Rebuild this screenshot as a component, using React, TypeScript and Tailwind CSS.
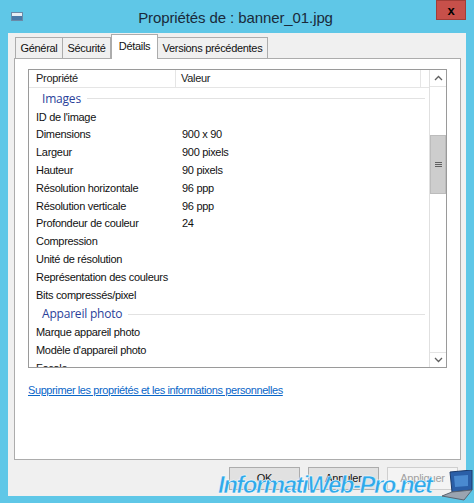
import React from "react";

const rows: Array<{ group?: string; label?: string; value?: string }> = [
  { group: "Images" },
  { label: "ID de l'image" },
  { label: "Dimensions", value: "900 x 90" },
  { label: "Largeur", value: "900 pixels" },
  { label: "Hauteur", value: "90 pixels" },
  { label: "Résolution horizontale", value: "96 ppp" },
  { label: "Résolution verticale", value: "96 ppp" },
  { label: "Profondeur de couleur", value: "24" },
  { label: "Compression" },
  { label: "Unité de résolution" },
  { label: "Représentation des couleurs" },
  { label: "Bits compressés/pixel" },
  { group: "Appareil photo" },
  { label: "Marque appareil photo" },
  { label: "Modèle d'appareil photo" },
  { label: "Focale" },
];

function Btn({ label, disabled }: { label: string; disabled?: boolean }) {
  return (
    <div
      className={
        "w-[71px] h-[23px] flex items-center justify-center border text-[11px] tracking-[-0.2px] " +
        (disabled ? "border-[#cfcfcf] bg-[#f4f4f4] text-[#a0a0a0]" : "border-[#acacac] bg-[#e1e1e1] text-[#111]")
      }
    >
      {label}
    </div>
  );
}

export default function App() {
  return (
    <div
      className="relative w-[474px] h-[503px] bg-[#5fc7e7] flex flex-col overflow-hidden"
      style={{ fontFamily: '"Liberation Sans", Arial, sans-serif' }}
    >
      {/* title bar */}
      <div className="h-[33px] flex items-start relative">
        <div className="mt-[12px] ml-[11px] w-[12px] h-[9px] bg-[#e8eef4] border border-[#6a8aa8] flex items-end">
          <div className="w-full h-[4px] bg-[#4a7aa8]" />
        </div>
        <div className="flex-1 text-center mt-[7px] text-[15px] text-[#1a2a3a] tracking-[-0.1px] pl-[12px]">
          Propriétés de : banner_01.jpg
        </div>
        <div className="w-[30px] h-[20px] mr-[8px] bg-[#c7504a] border border-[#a23d37] flex items-center justify-center text-[13px] font-bold text-black leading-none">
          x
        </div>
      </div>

      {/* client area */}
      <div className="mx-[8px] h-[463px] bg-[#f0f0f0] flex flex-col px-[6px]">
        {/* tabs */}
        <div className="h-[25px] flex items-end pl-[1px] text-[11px] tracking-[-0.3px] text-[#111]">
          <div className="w-[48px] h-[21px] border border-b-0 border-[#acacac] bg-[#f0f0f0] flex items-center justify-center">Général</div>
          <div className="w-[48px] h-[21px] border border-b-0 border-l-0 border-[#acacac] bg-[#f0f0f0] flex items-center justify-center">Sécurité</div>
          <div className="w-[47px] h-[25px] border border-b-0 border-[#acacac] bg-white flex justify-center pt-[3px] -mb-[1px] relative z-10">Détails</div>
          <div className="w-[110px] h-[21px] border border-b-0 border-l-0 border-[#acacac] bg-[#f0f0f0] flex items-center justify-center">Versions précédentes</div>
        </div>

        {/* tab panel */}
        <div className="h-[402px] w-[447px] bg-white border border-[#acacac] flex flex-col px-[13px] pt-[10px]">
          {/* list view */}
          <div className="h-[299px] w-[419px] border border-[#9a9a9a] flex">
            <div className="flex-1 flex flex-col overflow-hidden">
              <div className="h-[18px] flex text-[11px] tracking-[-0.3px] text-[#222] border-b border-[#e5e5e5] shrink-0">
                <div className="w-[147px] pl-[7px] border-r border-[#e5e5e5] flex items-center">Propriété</div>
                <div className="w-[245px] pl-[5px] border-r border-[#e5e5e5] flex items-center">Valeur</div>
              </div>
              <div className="flex flex-col text-[11px] tracking-[-0.3px] text-[#111]">
                {rows.map((r, i) =>
                  r.group ? (
                    <div key={i} className="h-[20px] flex items-center pl-[13px] pt-[1px] gap-[6px]">
                      <span className="text-[12px] tracking-[-0.2px] text-[#2a3f9a]" style={{ fontFamily: '"Open Sans", sans-serif' }}>
                        {r.group}
                      </span>
                      <div className="flex-1 mr-[4px] h-px bg-[#e2e2e2]" />
                    </div>
                  ) : (
                    <div key={i} className="h-[17.8px] flex items-center shrink-0">
                      <div className="w-[147px] pl-[7px] whitespace-nowrap">{r.label}</div>
                      <div className="pl-[6px]">{r.value}</div>
                    </div>
                  )
                )}
              </div>
            </div>
            {/* scrollbar */}
            <div className="w-[17px] bg-[#f0f0f0] border-l border-[#e0e0e0] flex flex-col shrink-0">
              <div className="h-[17px] bg-white border-b border-[#e4e4e4] flex items-center justify-center">
                <svg width="9" height="6" viewBox="0 0 9 6"><path d="M1 5 L4.5 1.5 L8 5" stroke="#606060" strokeWidth="1.3" fill="none" /></svg>
              </div>
              <div className="h-[48px] bg-white" />
              <div className="h-[59px] bg-[#cdcdcd] border border-[#bcbcbc] flex flex-col items-center justify-center gap-[1px]">
                <div className="w-[7px] h-px bg-[#606060]" />
                <div className="w-[7px] h-px bg-[#606060]" />
                <div className="w-[7px] h-px bg-[#606060]" />
              </div>
              <div className="flex-1 bg-white" />
              <div className="h-[15px] bg-white border-t border-[#e4e4e4] flex items-center justify-center">
                <svg width="9" height="6" viewBox="0 0 9 6"><path d="M1 1 L4.5 4.5 L8 1" stroke="#606060" strokeWidth="1.3" fill="none" /></svg>
              </div>
            </div>
          </div>

          <div className="mt-[14px] text-[11px] tracking-[-0.4px] text-[#0a66c8] underline">
            Supprimer les propriétés et les informations personnelles
          </div>
        </div>

        {/* buttons */}
        <div className="flex justify-end gap-[8px] pr-[2px] mt-[7px]">
          <Btn label="OK" />
          <Btn label="Annuler" />
          <Btn label="Appliquer" disabled />
        </div>
      </div>

      {/* watermark */}
      <div
        className="absolute left-[218px] top-[473px] text-[24px] italic font-bold text-[#2fa9ea] tracking-[-1.5px] leading-none whitespace-nowrap"
        style={{ WebkitTextStroke: "0.5px #ffffff" }}
      >
        InformatiWeb-Pro.net
      </div>
      <svg className="absolute left-[440px] top-[470px]" width="34" height="33" viewBox="0 0 34 33">
        <path d="M10 2 L32 0 L32 20 L12 22 Z" fill="#2a5fa8" stroke="#1a3a6a" />
        <path d="M14 6 L28 5 L28 16 L15 17 Z" fill="#4a8ad0" />
        <path d="M2 26 L12 22 L32 20 L24 30 Z" fill="#9aa4b0" stroke="#5a6470" />
      </svg>
    </div>
  );
}
